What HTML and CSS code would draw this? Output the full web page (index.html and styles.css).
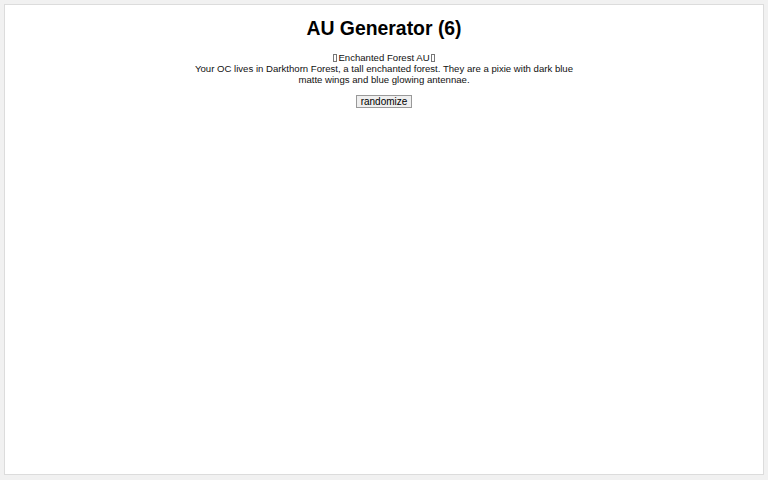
FILE: index.html
```html
<!DOCTYPE html>
<html>
<head>
    <title>AU Generator</title>
    <link rel="stylesheet" href="styles.css">
</head>
<body>
    <div class="page">
        <h1>AU Generator (6)</h1>
        <div class="result">
            <div class="au-name"><span class="mark"></span>Enchanted Forest AU<span class="mark"></span></div>
            <div class="au-text">Your OC lives in Darkthorn Forest, a tall enchanted forest. They are a pixie with dark blue matte wings and blue glowing antennae.</div>
        </div>
        <button class="randomize">randomize</button>
    </div>
</body>
</html>
```

FILE: styles.css
```css
body {
    margin: 0;
    padding: 4px;
    background: #f1f1f1;
    font-family: "Liberation Sans", Arial, sans-serif;
    height: 480px;
    box-sizing: border-box;
}

.page {
    background: #fff;
    border: 1px solid #dcdcdc;
    height: 471px;
    box-sizing: border-box;
    text-align: center;
    padding-top: 12px;
}

h1 {
    font-size: 19.4px;
    margin: 0 0 12px;
    color: #000;
}

.result {
    width: 384px;
    margin: 0 auto;
    font-size: 9.6px;
    line-height: 11px;
    color: #111;
}

/* missing-glyph boxes around the AU name */
.mark {
    display: inline-block;
    width: 2px;
    height: 6px;
    border: 1px solid #777;
    margin: 0 1px;
    vertical-align: -1px;
}

.randomize {
    margin-top: 10px;
    font-family: "Liberation Sans", Arial, sans-serif;
    font-size: 10px;
    line-height: 11px;
    padding: 0 4px;
    background: #efefef;
    border: 1px solid #999;
    border-radius: 0;
    color: #000;
}
```
